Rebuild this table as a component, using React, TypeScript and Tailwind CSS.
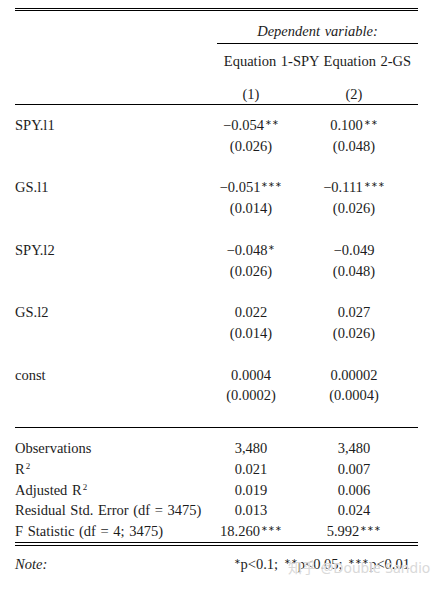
import React from 'react'

type Row = { label: React.ReactNode; a: React.ReactNode; b: React.ReactNode }

const Stars = ({ n }: { n: number }) => (
  <sup className="text-[8px] relative -top-[5px] ml-[1px]">{'∗'.repeat(n)}</sup>
)

const Sq = () => <sup className="text-[9px] relative -top-[5px] ml-[1px]">2</sup>

const coefs = [
  { label: 'SPY.l1', a: <>−0.054<Stars n={2} /></>, b: <>0.100<Stars n={2} /></>, sa: '(0.026)', sb: '(0.048)' },
  { label: 'GS.l1', a: <>−0.051<Stars n={3} /></>, b: <>−0.111<Stars n={3} /></>, sa: '(0.014)', sb: '(0.026)' },
  { label: 'SPY.l2', a: <>−0.048<Stars n={1} /></>, b: <>−0.049</>, sa: '(0.026)', sb: '(0.048)' },
  { label: 'GS.l2', a: <>0.022</>, b: <>0.027</>, sa: '(0.014)', sb: '(0.026)' },
  { label: 'const', a: <>0.0004</>, b: <>0.00002</>, sa: '(0.0002)', sb: '(0.0004)' },
]

const stats: (Row & { key: string })[] = [
  { key: 'obs', label: 'Observations', a: '3,480', b: '3,480' },
  { key: 'r2', label: <>R<Sq /></>, a: '0.021', b: '0.007' },
  { key: 'adj', label: <>Adjusted R<Sq /></>, a: '0.019', b: '0.006' },
  { key: 'rse', label: 'Residual Std. Error (df = 3475)', a: '0.013', b: '0.024' },
  { key: 'f', label: 'F Statistic (df = 4; 3475)', a: <>18.260<Stars n={3} /></>, b: <>5.992<Stars n={3} /></> },
]

function Line({ label, a, b }: Row) {
  return (
    <div className="grid grid-cols-[202px_68px_133px] h-[20.8px] leading-[20.8px] whitespace-nowrap">
      <div>{label}</div>
      <div className="text-center">{a}</div>
      <div className="text-center pl-[5px]">{b}</div>
    </div>
  )
}

export default function App() {
  return (
    <div
      className="relative w-[440px] h-[589px] bg-white text-[#1c1c1c] text-[14.5px] [word-spacing:1px]"
      style={{ fontFamily: '"Liberation Serif", "Times New Roman", serif' }}
    >
      <div className="pt-[8px] pl-[15px] w-[418px]">
        {/* top rule */}
        <div className="h-[3px] border-y border-black" />

        {/* header */}
        <div className="grid grid-cols-[202px_201px]">
          <div />
          <div>
            <div className="h-[32px] pt-[8px] leading-[24px] text-center italic">Dependent variable:</div>
            <div className="border-t border-black" />
            <div className="h-[40px] pt-[6px] leading-[22px] text-center whitespace-nowrap">Equation 1-SPY Equation 2-GS</div>
          </div>
        </div>
        <div className="grid grid-cols-[202px_68px_133px] h-[20px] leading-[20px]">
          <div />
          <div className="text-center">(1)</div>
          <div className="text-center pl-[5px]">(2)</div>
        </div>
        <div className="border-t border-black" />

        {/* coefficients */}
        <div className="pt-[10px]">
          {coefs.map((c) => (
            <div key={c.label}>
              <Line label={c.label} a={c.a} b={c.b} />
              <Line label="" a={c.sa} b={c.sb} />
              <div className="h-[20.8px]" />
            </div>
          ))}
        </div>
        <div className="border-t border-black" />

        {/* stats */}
        <div className="pt-[10px]">
          {stats.map((s) => (
            <Line key={s.key} label={s.label} a={s.a} b={s.b} />
          ))}
        </div>
        <div className="h-[4px] border-y border-black" />

        {/* note */}
        <div className="grid grid-cols-[202px_201px] pt-[8px] leading-[20px]">
          <div className="italic">Note:</div>
          <div className="text-right pr-[8px] whitespace-nowrap">
            <Stars n={1} />p&lt;0.1; <Stars n={2} />p&lt;0.05; <Stars n={3} />p&lt;0.01
          </div>
        </div>
      </div>

      {/* watermark */}
      <div
        className="absolute left-[288px] top-[557px] text-[14px] text-[#d9d9d9] whitespace-nowrap"
        style={{ fontFamily: '"Noto Sans", "Noto Sans CJK SC", sans-serif', textShadow: '0 0 1px #fff' }}
      >
        知乎 @Double Sandio
      </div>
    </div>
  )
}
